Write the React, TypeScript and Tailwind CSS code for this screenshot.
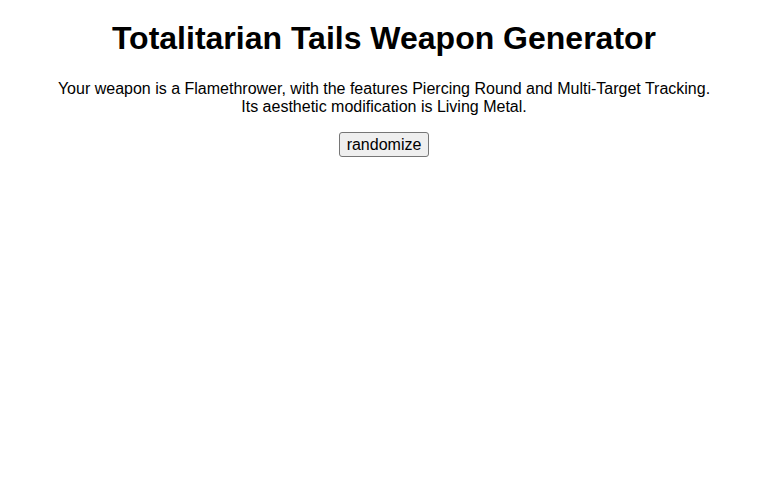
export default function App() {
  return (
    <div className="min-h-[480px] bg-white text-black text-center font-['Liberation_Sans',Arial,sans-serif]">
      <div className="pt-[20px]">
        <h1 className="text-[32px] leading-[37px] font-bold">Totalitarian Tails Weapon Generator</h1>
        <p className="mt-[23px] text-[16px] leading-[18px]">
          Your weapon is a Flamethrower, with the features Piercing Round and Multi-Target Tracking.
          <br />
          Its aesthetic modification is Living Metal.
        </p>
        <div className="mt-[16px]">
          <button className="bg-[#efefef] border border-[#767676] rounded-[3px] px-[7px] py-[2px] text-[16px] leading-[19px] text-black">
            randomize
          </button>
        </div>
      </div>
    </div>
  );
}
